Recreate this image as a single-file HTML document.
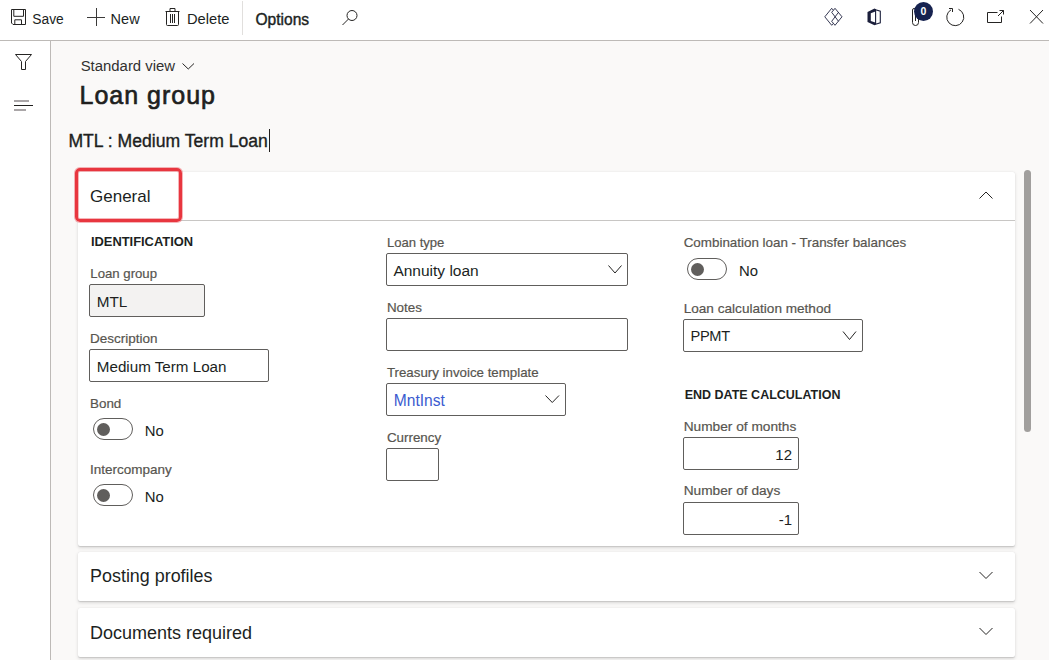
<!DOCTYPE html>
<html><head><meta charset="utf-8"><style>
*{margin:0;padding:0;box-sizing:border-box}
html,body{width:1049px;height:660px;overflow:hidden;background:#faf9f8;font-family:"Liberation Sans",sans-serif}
.t{position:absolute;white-space:nowrap}
#hdr{position:absolute;left:0;top:0;width:1049px;height:41px;background:#fff;border-bottom:1px solid #bdbab7}
#side{position:absolute;left:0;top:41px;width:51px;height:619px;background:#fff;border-right:1px solid #bdbab7}
.card{position:absolute;left:78px;width:937px;background:#fff;border-radius:2px;box-shadow:0 1.6px 3.6px rgba(0,0,0,.13),0 .3px .9px rgba(0,0,0,.11)}
.box{position:absolute;border:1px solid #605e5c;border-radius:2px;background:#fff}
.tg{position:absolute;width:40px;height:22px;border:1px solid #605e5c;border-radius:11px;background:#fff}
.tg i{position:absolute;left:3px;top:4px;width:13px;height:13px;border-radius:50%;background:#605e5c}
</style></head>
<body>
<div id="hdr"></div><div class="t" style="left:32.3px;top:13.02px;font-size:13.8px;line-height:13.8px;font-weight:400;color:#201f1e;">Save</div>
<div class="t" style="left:110.6px;top:12.43px;font-size:14.5px;line-height:14.5px;font-weight:400;color:#201f1e;">New</div>
<div class="t" style="left:187px;top:12.26px;font-size:14.7px;line-height:14.7px;font-weight:400;color:#201f1e;">Delete</div>
<div style="position:absolute;left:242px;top:1px;width:1px;height:34px;background:#e1dfdd"></div><div class="t" style="left:255.4px;top:11.79px;font-size:15.6px;line-height:15.6px;font-weight:400;color:#201f1e;-webkit-text-stroke:0.4px #201f1e">Options</div>
<div id="side"></div><div class="t" style="left:80.7px;top:59.19px;font-size:14.9px;line-height:14.9px;font-weight:400;color:#323130;">Standard view</div>
<div class="t" style="left:79.5px;top:83.44px;font-size:25px;line-height:25px;font-weight:400;color:#201f1e;-webkit-text-stroke:0.65px #201f1e;letter-spacing:1px">Loan group</div>
<div class="t" style="left:68.4px;top:132.70px;font-size:17.6px;line-height:17.6px;font-weight:400;color:#201f1e;-webkit-text-stroke:0.35px #201f1e">MTL : Medium Term Loan</div>
<div style="position:absolute;left:269px;top:129px;width:1px;height:23px;background:#201f1e"></div><div class="card" style="top:172px;height:374px"></div><div style="position:absolute;left:78px;top:220px;width:937px;height:1px;background:#c8c6c4"></div><div class="card" style="top:552px;height:49px"></div><div class="card" style="top:608px;height:49px"></div><div class="t" style="left:90px;top:188.31px;font-size:17.0px;line-height:17.0px;font-weight:400;color:#201f1e;">General</div>
<div class="t" style="left:90.1px;top:568.45px;font-size:17.9px;line-height:17.9px;font-weight:400;color:#201f1e;">Posting profiles</div>
<div class="t" style="left:90px;top:623.66px;font-size:18.0px;line-height:18.0px;font-weight:400;color:#201f1e;">Documents required</div>
<div class="t" style="left:90.9px;top:236.08px;font-size:12.9px;line-height:12.9px;font-weight:700;color:#201f1e;">IDENTIFICATION</div>
<div class="t" style="left:90.3px;top:266.53px;font-size:13.2px;line-height:13.2px;font-weight:400;color:#57554f;-webkit-text-stroke:0.2px #57554f">Loan group</div>
<div class="box" style="left:89px;top:284px;width:116px;height:33px;background:#f3f2f1"></div><div class="t" style="left:96.7px;top:293.85px;font-size:15.3px;line-height:15.3px;font-weight:400;color:#201f1e;">MTL</div>
<div class="t" style="left:89.9px;top:331.67px;font-size:13.5px;line-height:13.5px;font-weight:400;color:#57554f;-webkit-text-stroke:0.2px #57554f">Description</div>
<div class="box" style="left:89px;top:349px;width:180px;height:33px"></div><div class="t" style="left:96.8px;top:358.83px;font-size:15.2px;line-height:15.2px;font-weight:400;color:#201f1e;">Medium Term Loan</div>
<div class="t" style="left:90px;top:396.66px;font-size:13.4px;line-height:13.4px;font-weight:400;color:#57554f;-webkit-text-stroke:0.2px #57554f">Bond</div>
<div class="tg" style="left:93px;top:418px"><i></i></div><div class="t" style="left:144.8px;top:423.79px;font-size:14.9px;line-height:14.9px;font-weight:400;color:#201f1e;">No</div>
<div class="t" style="left:90px;top:462.97px;font-size:13.5px;line-height:13.5px;font-weight:400;color:#57554f;-webkit-text-stroke:0.2px #57554f">Intercompany</div>
<div class="tg" style="left:93px;top:484px"><i></i></div><div class="t" style="left:144.8px;top:489.79px;font-size:14.9px;line-height:14.9px;font-weight:400;color:#201f1e;">No</div>
<div class="t" style="left:386.9px;top:236.21px;font-size:13.1px;line-height:13.1px;font-weight:400;color:#57554f;-webkit-text-stroke:0.2px #57554f">Loan type</div>
<div class="box" style="left:386px;top:253px;width:242px;height:33px"></div><div class="t" style="left:393.4px;top:263.18px;font-size:15.5px;line-height:15.5px;font-weight:400;color:#201f1e;">Annuity loan</div>
<div class="t" style="left:386.9px;top:300.96px;font-size:13.4px;line-height:13.4px;font-weight:400;color:#57554f;-webkit-text-stroke:0.2px #57554f">Notes</div>
<div class="box" style="left:386px;top:318px;width:242px;height:33px"></div><div class="t" style="left:386.9px;top:365.84px;font-size:13.3px;line-height:13.3px;font-weight:400;color:#57554f;-webkit-text-stroke:0.2px #57554f">Treasury invoice template</div>
<div class="box" style="left:386px;top:383px;width:180px;height:33px"></div><div class="t" style="left:393.8px;top:392.69px;font-size:15.6px;line-height:15.6px;font-weight:400;color:#3b5bd0;">MntInst</div>
<div class="t" style="left:386.9px;top:430.96px;font-size:13.4px;line-height:13.4px;font-weight:400;color:#57554f;-webkit-text-stroke:0.2px #57554f">Currency</div>
<div class="box" style="left:386px;top:448px;width:53px;height:33px"></div><div class="t" style="left:683.7px;top:235.66px;font-size:13.4px;line-height:13.4px;font-weight:400;color:#57554f;-webkit-text-stroke:0.2px #57554f">Combination loan - Transfer balances</div>
<div class="tg" style="left:687px;top:258px"><i></i></div><div class="t" style="left:739px;top:263.99px;font-size:14.9px;line-height:14.9px;font-weight:400;color:#201f1e;">No</div>
<div class="t" style="left:683.7px;top:301.59px;font-size:13.6px;line-height:13.6px;font-weight:400;color:#57554f;-webkit-text-stroke:0.2px #57554f">Loan calculation method</div>
<div class="box" style="left:683px;top:319px;width:180px;height:33px"></div><div class="t" style="left:690.6px;top:329.34px;font-size:14.6px;line-height:14.6px;font-weight:400;color:#201f1e;letter-spacing:-0.35px">PPMT</div>
<div class="t" style="left:684.7px;top:389.32px;font-size:12.5px;line-height:12.5px;font-weight:700;color:#201f1e;">END DATE CALCULATION</div>
<div class="t" style="left:683.7px;top:419.80px;font-size:13.7px;line-height:13.7px;font-weight:400;color:#57554f;-webkit-text-stroke:0.2px #57554f">Number of months</div>
<div class="box" style="left:683px;top:437px;width:116px;height:33px"></div><div class="t" style="left:684px;width:108px;text-align:right;top:447.30px;font-size:15px;line-height:15px;color:#201f1e">12</div><div class="t" style="left:683.7px;top:484.40px;font-size:13.7px;line-height:13.7px;font-weight:400;color:#57554f;-webkit-text-stroke:0.2px #57554f">Number of days</div>
<div class="box" style="left:683px;top:502px;width:116px;height:33px"></div><div class="t" style="left:684px;width:108px;text-align:right;top:511.80px;font-size:15px;line-height:15px;color:#201f1e">-1</div><div style="position:absolute;left:1024px;top:170px;width:7px;height:262px;border-radius:4px;background:#a19f9d"></div><div style="position:absolute;left:75px;top:168px;width:107px;height:54px;border:3px solid #e8363f;border-radius:5px;box-shadow:0 0 0 1px rgba(236,90,100,.45),inset 0 0 0 1px rgba(236,90,100,.45)"></div><svg style="position:absolute;left:0px;top:0px" width="40" height="40" viewBox="0 0 40 40" fill="none" stroke="#252423" stroke-width="1"><path d="M11.5 9.5H25.5V24.5H13L11.5 23Z"/><path d="M13.8 9.5V16.3H23.5V9.5"/><path d="M14.8 24.5V19.8H21.5V24.5"/></svg>
<svg style="position:absolute;left:80px;top:0" width="30" height="40" fill="none" stroke="#3b3a39" stroke-width="1"><path d="M16.5 8V26M7 17.5H25"/></svg>
<svg style="position:absolute;left:160px;top:0" width="25" height="40" fill="none" stroke="#252423" stroke-width="1"><path d="M5.5 11.5H19.5"/><path d="M10 11.5V8.5H15V11.5"/><path d="M6.5 11.5V24.5Q6.5 25.5 7.5 25.5H17.5Q18.5 25.5 18.5 24.5V11.5"/><path d="M10.5 14V23M12.5 14V23M14.5 14V23"/></svg>
<svg style="position:absolute;left:335px;top:0" width="30" height="40" fill="none" stroke="#252423" stroke-width="1"><circle cx="17" cy="15.5" r="5"/><path d="M13.5 19L7.5 25"/></svg>
<svg style="position:absolute;left:820px;top:0" width="30" height="40" fill="none" stroke="#1f2340" stroke-width="0.9"><path d="M11.7 8.3L4.8 16.8L11.7 25.3L13.4 23.3L15 25.3L22 16.8L15 8.3L13.4 10.3Z"/><path d="M13.4 10.3L11.7 12.3L18.5 21.3M13.4 23.3L11.7 21.3L18.5 12.3"/></svg>
<svg style="position:absolute;left:860px;top:0" width="30" height="40"><path d="M7.5 12L14.5 8.5L16 9.3V11.2L10.8 13.3V21L16 22.8V24.6L14.5 25.2L7.5 22Z" fill="#1b1f3b"/><path d="M15.6 9.8L20.3 11.1V22.9L15.6 24.2M15.6 9.5V24.5" fill="none" stroke="#1b1f3b" stroke-width="1.1"/></svg>
<svg style="position:absolute;left:905px;top:0" width="20" height="40" fill="none" stroke="#252423" stroke-width="1"><path d="M13.5 12V22.5Q13.5 25.5 10.5 25.5Q7.5 25.5 7.5 22.5V10Q7.5 8.5 9 8.5Q10.5 8.5 10.5 10V21"/></svg>
<div style="position:absolute;left:914px;top:2px;width:19px;height:19px;border-radius:50%;background:#16224f"></div>
<div class="t" style="left:914px;top:2px;width:19px;height:19px;line-height:19px;text-align:center;font-size:10.5px;font-weight:700;color:#fff">0</div>
<svg style="position:absolute;left:940px;top:0" width="30" height="40" fill="none" stroke="#252423" stroke-width="1"><path d="M18.5 9.3A8.5 8.5 0 1 1 11 9.8"/><path d="M9 8.5H12.5V12"/></svg>
<svg style="position:absolute;left:980px;top:0" width="30" height="40" fill="none" stroke="#252423" stroke-width="1"><path d="M17.5 12.5H7.5V22.5H21.5V16.5"/><path d="M18 16L23.5 10.5M19.5 10.5H23.5V14.5"/></svg>
<svg style="position:absolute;left:1025px;top:0" width="24" height="40" fill="none" stroke="#252423" stroke-width="1"><path d="M5 10L18 23.5M18 10L5 23.5"/></svg>
<svg style="position:absolute;left:10px;top:50px" width="30" height="25" fill="none" stroke="#252423" stroke-width="1"><path d="M5.5 4.5H21.5L15.5 11.5V19.5H11.5V11.5Z"/></svg>
<div style="position:absolute;left:14px;top:100px;width:15px;height:2px;background:#aaa6a8"></div>
<div style="position:absolute;left:14px;top:105px;width:19px;height:1px;background:#201f1e"></div>
<div style="position:absolute;left:14px;top:109px;width:12px;height:2px;background:#aaa6a8"></div>
<svg style="position:absolute;left:0;top:0;overflow:visible" width="1" height="1" fill="none" stroke="#252423" stroke-width="1"><path d="M182.5 63.5 L188.25 69.0 L194.0 63.5"/></svg>
<svg style="position:absolute;left:0;top:0;overflow:visible" width="1" height="1" fill="none" stroke="#252423" stroke-width="1"><path d="M979.5 198.5 L986.0 192 L992.5 198.5"/></svg>
<svg style="position:absolute;left:0;top:0;overflow:visible" width="1" height="1" fill="none" stroke="#252423" stroke-width="1"><path d="M979.5 572 L986.0 578.5 L992.5 572"/></svg>
<svg style="position:absolute;left:0;top:0;overflow:visible" width="1" height="1" fill="none" stroke="#252423" stroke-width="1"><path d="M979.5 628 L986.0 634.5 L992.5 628"/></svg>
<svg style="position:absolute;left:0;top:0;overflow:visible" width="1" height="1" fill="none" stroke="#252423" stroke-width="1"><path d="M608.5 265.5 L615.0 273.0 L621.5 265.5"/></svg>
<svg style="position:absolute;left:0;top:0;overflow:visible" width="1" height="1" fill="none" stroke="#252423" stroke-width="1"><path d="M545.5 395.5 L552.25 402.5 L559.0 395.5"/></svg>
<svg style="position:absolute;left:0;top:0;overflow:visible" width="1" height="1" fill="none" stroke="#252423" stroke-width="1"><path d="M843 331.5 L849.5 339.5 L856 331.5"/></svg>

</body></html>
